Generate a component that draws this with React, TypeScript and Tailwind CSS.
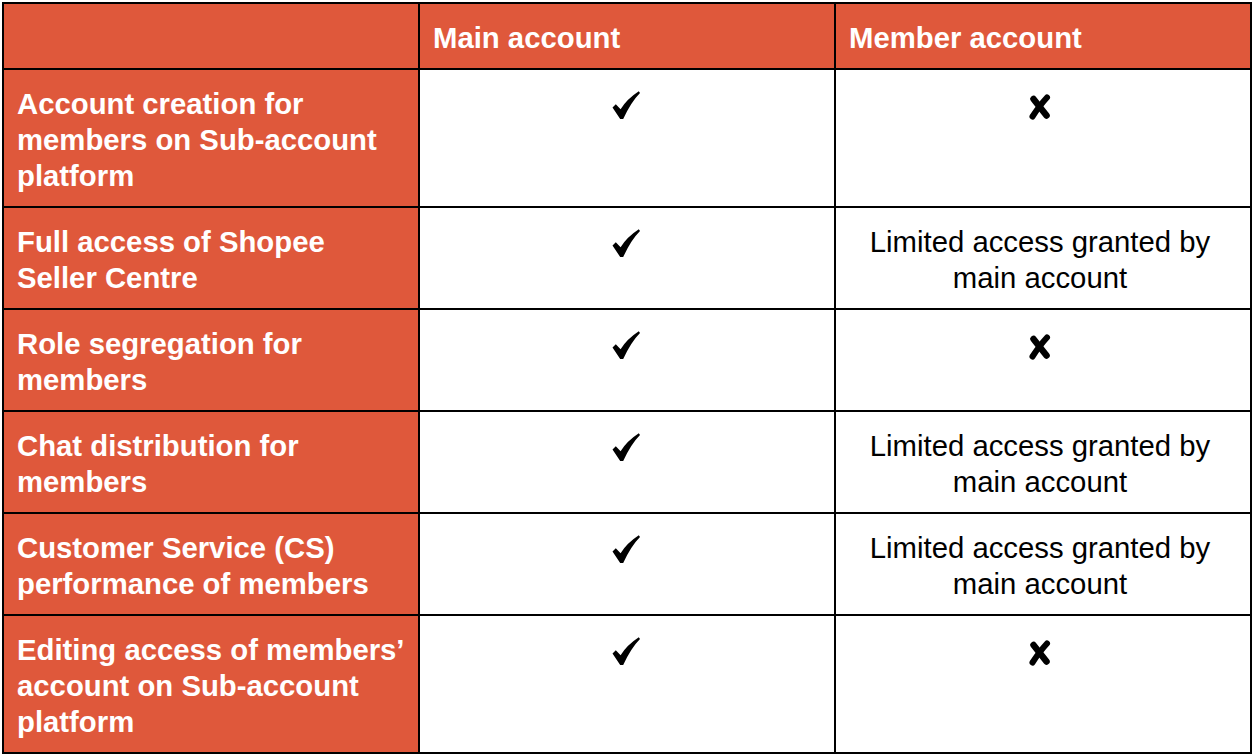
const rows: { label: string; main: string; member: string }[] = [
  { label: "Account creation for members on Sub-account platform", main: "check", member: "cross" },
  { label: "Full access of Shopee Seller Centre", main: "check", member: "Limited access granted by main account" },
  { label: "Role segregation for members", main: "check", member: "cross" },
  { label: "Chat distribution for members", main: "check", member: "Limited access granted by main account" },
  { label: "Customer Service (CS) performance of members", main: "check", member: "Limited access granted by main account" },
  { label: "Editing access of members\u2019 account on Sub-account platform", main: "check", member: "cross" },
];

function Mark({ value }: { value: string }) {
  if (value === "check") {
    return (
      <svg width="28" height="28" viewBox="0 0 28 28" className="mx-auto mt-[5px] block">
        <path d="M0.5 16.5 L3.8 13.2 L8.6 18.2 Q15 8 26.8 0.3 L28 2 Q19 11 11.2 28 L8.2 28 Z" fill="black" />
      </svg>
    );
  }
  if (value === "cross") {
    return (
      <svg width="22" height="26" viewBox="0 0 22 26" className="mx-auto mt-[8px] block">
        <path d="M4.5 5 L17.5 21.5" stroke="black" strokeWidth="6.5" strokeLinecap="round" fill="none" />
        <path d="M18 3.5 Q11 11 3.5 22.5" stroke="black" strokeWidth="6" strokeLinecap="round" fill="none" />
      </svg>
    );
  }
  return <span>{value}</span>;
}

export default function App() {
  return (
    <div className="w-[1254px] h-[756px] bg-white font-['Liberation_Sans',Arial,sans-serif] text-[29.3px] leading-[36px]">
      <div className="ml-[2px] mt-[2px] w-[1250px] grid grid-cols-[414px_414px_414px] gap-[2px] p-[2px] bg-black">
        <div className="bg-[#df583b] px-[13px] pt-[16px] pb-[12px]"></div>
        <div className="bg-[#df583b] px-[13px] pt-[16px] pb-[12px] font-bold text-white">Main account</div>
        <div className="bg-[#df583b] px-[13px] pt-[16px] pb-[12px] font-bold text-white">Member account</div>
        {rows.map((r) => (
          <div key={r.label} className="contents">
            <div className="bg-[#df583b] px-[13px] pt-[16px] pb-[12px] font-bold text-white">{r.label}</div>
            <div className="bg-white pl-[13px] pr-[15px] pt-[16px] pb-[12px] text-center text-black">
              <Mark value={r.main} />
            </div>
            <div className="bg-white pl-[13px] pr-[19px] pt-[16px] pb-[12px] text-center text-black">
              <Mark value={r.member} />
            </div>
          </div>
        ))}
      </div>
    </div>
  );
}
